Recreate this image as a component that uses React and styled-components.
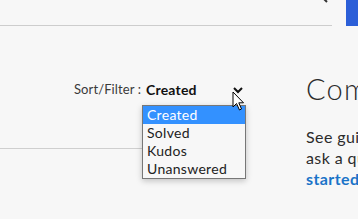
import styled, { createGlobalStyle } from "styled-components";

const Global = createGlobalStyle`
  html, body {
    margin: 0;
    padding: 0;
    background: #f7f7f7;
  }
  body {
    width: 358px;
    height: 219px;
    overflow: hidden;
    font-family: "Lato", "Open Sans", sans-serif;
  }
`;

const Page = styled.div`
  width: 358px;
  height: 219px;
  overflow: hidden;
  position: relative;
`;

const TopBar = styled.div`
  display: flex;
  height: 26px;
`;

const SearchStrip = styled.div`
  width: 332px;
  height: 25px;
  border-bottom: 1px solid #cdcdcd;
  position: relative;
`;

const SearchTail = styled.svg`
  position: absolute;
  left: 322px;
  top: -2px;
`;

const BlueTab = styled.div`
  margin-left: 14px;
  width: 12px;
  height: 26px;
  background: #2c5fd8;
`;

const Body = styled.div`
  display: flex;
`;

const LeftCol = styled.div`
  width: 306px;
  flex-shrink: 0;
  position: relative;
`;

const SortRow = styled.div`
  display: flex;
  align-items: center;
  height: 22px;
  margin-top: 52px;
  padding-left: 74px;
  font-size: 13px;
  color: #333;
`;

const Label = styled.span`
  color: #3a3a3a;
  letter-spacing: 0.1px;
`;

const Selected = styled.span`
  margin-left: 5px;
  font-weight: 700;
  color: #111;
  font-size: 14px;
  letter-spacing: 0.2px;
`;

const Chevron = styled.svg`
  margin-left: 36px;
  margin-top: 2px;
`;

const Divider = styled.div`
  width: 142px;
  margin-top: 48px;
  border-top: 1px solid #cfcfcf;
`;

const Menu = styled.ul`
  position: absolute;
  left: 142px;
  top: 79px;
  width: 102px;
  margin: 0;
  padding: 0;
  list-style: none;
  background: #f7f7f7;
  border: 1px solid #777;
  box-shadow: 0 2px 6px rgba(0, 0, 0, 0.22);
  z-index: 2;
`;

const Option = styled.li`
  height: 18px;
  line-height: 18px;
  padding-left: 4px;
  font-size: 14px;
  color: ${(p) => (p.$active ? "#fff" : "#222")};
  background: ${(p) => (p.$active ? "#3391ff" : "transparent")};
  letter-spacing: 0.3px;
`;

const Cursor = styled.svg`
  position: absolute;
  left: 232px;
  top: 65px;
  z-index: 3;
`;

const RightCol = styled.div`
  padding-top: 46px;
  white-space: nowrap;
  color: #2b2b2b;
`;

const Heading = styled.div`
  font-size: 29px;
  font-weight: 300;
  letter-spacing: 1.2px;
  line-height: 33px;
`;

const Blurb = styled.p`
  margin: 21px 0 0;
  font-size: 16px;
  line-height: 21px;
  letter-spacing: 0.4px;
`;

const Link = styled.span`
  color: #1a73c8;
  font-weight: 700;
`;

export default function App() {
  return (
    <Page>
      <Global />
      <TopBar>
        <SearchStrip>
          <SearchTail width="8" height="7" viewBox="0 0 8 7">
            <path d="M1 0 L5 4" stroke="#333" strokeWidth="2" fill="none" />
          </SearchTail>
        </SearchStrip>
        <BlueTab />
      </TopBar>
      <Body>
        <LeftCol>
          <SortRow>
            <Label>Sort/Filter :</Label>
            <Selected>Created</Selected>
            <Chevron width="10" height="7" viewBox="0 0 10 7">
              <path d="M1 1 L5 5 L9 1" stroke="#111" strokeWidth="2" fill="none" />
            </Chevron>
          </SortRow>
          <Divider />
          <Menu>
            <Option $active>Created</Option>
            <Option>Solved</Option>
            <Option>Kudos</Option>
            <Option>Unanswered</Option>
          </Menu>
          <Cursor width="14" height="21" viewBox="0 0 14 21">
            <path
              d="M1 1 L1 16 L4.5 12.5 L7.5 19 L9.5 18 L6.8 11.8 L11.5 11.8 Z"
              fill="#fff"
              stroke="#000"
              strokeWidth="1"
              strokeLinejoin="round"
            />
          </Cursor>
        </LeftCol>
        <RightCol>
          <Heading>Community</Heading>
          <Blurb>
            See guides or
            <br />
            ask a question to
            <br />
            <Link>started</Link>
          </Blurb>
        </RightCol>
      </Body>
    </Page>
  );
}
